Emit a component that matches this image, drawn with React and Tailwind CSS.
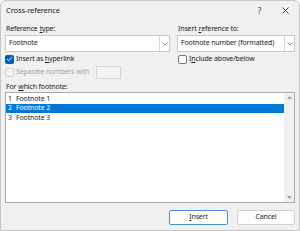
import React from 'react';

const font = { fontFamily: '"Noto Sans", "Segoe UI", sans-serif' };

function Chevron() {
  return (
    <svg width="6" height="4" viewBox="0 0 6 4" fill="none">
      <path d="M0.5 0.5 L3 3 L5.5 0.5" stroke="#707070" strokeWidth="0.8" />
    </svg>
  );
}

function Select({ value, className }) {
  return (
    <div className={`flex h-[17px] items-stretch border border-[#c9c9c9] bg-white ${className}`}>
      <div className="flex flex-1 items-center whitespace-nowrap pl-[3px] text-[#1b1b1b]">{value}</div>
      <div className="flex w-[10px] items-center justify-center border-l border-[#d6d6d6]">
        <Chevron />
      </div>
    </div>
  );
}

function Check({ checked, disabled }) {
  if (checked) {
    return (
      <div className="flex h-[9px] w-[9px] items-center justify-center rounded-[2px] bg-[#005fb8]">
        <svg width="7" height="6" viewBox="0 0 7 6" fill="none">
          <path d="M1 3 L2.8 4.8 L6 1.2" stroke="white" strokeWidth="0.9" />
        </svg>
      </div>
    );
  }
  return (
    <div
      className={`h-[9px] w-[9px] rounded-[2px] border ${
        disabled ? 'border-[#d2d2d2] bg-[#f3f3f3]' : 'border-[#7a7a7a] bg-[#fbfbfb]'
      }`}
    />
  );
}

const rows = [
  { n: 1, label: 'Footnote 1' },
  { n: 2, label: 'Footnote 2', selected: true },
  { n: 3, label: 'Footnote 3' },
];

export default function App() {
  return (
    <div style={font} className="flex h-[231px] w-[300px] flex-col overflow-hidden rounded-t-[6px] border border-[#c6c6c6] bg-[#f0f0f0] text-[7px] tracking-[-0.15px] text-[#1b1b1b]">
      {/* title bar */}
      <div className="flex h-[19px] items-center pl-[5px]">
        <span className="text-[7.6px]">Cross-reference</span>
        <span className="ml-auto mr-[21px] text-[8px] text-[#333]">?</span>
        <svg className="mr-[10px]" width="7" height="7" viewBox="0 0 7 7" fill="none">
          <path d="M0.5 0.5 L6.5 6.5 M6.5 0.5 L0.5 6.5" stroke="#333" strokeWidth="0.9" />
        </svg>
      </div>

      <div className="flex flex-1 flex-col px-[4px]">
        <div className="mt-[4px] flex gap-[7px]">
          <div className="w-[165px]">
            <div className="flex h-[10px] items-center pl-[1px]">
              Reference <span className="ml-[2px] underline">t</span>ype:
            </div>
            <Select value="Footnote" className="mt-[1px]" />
            <div className="mt-[2px] flex h-[10px] items-center gap-[2px]">
              <Check checked />
              <span>
                Insert as <span className="underline">h</span>yperlink
              </span>
            </div>
            <div className="mt-[2px] flex h-[13px] items-center whitespace-nowrap">
              <Check disabled />
              <span className="ml-[2px] text-[#a3a3a3]">Separate numbers with</span>
              <div className="ml-[6px] h-[13px] w-[25px] border border-[#d4d4d4] bg-[#f3f3f3]" />
            </div>
          </div>
          <div className="flex-1">
            <div className="flex h-[10px] items-center pl-[1px]">
              Insert <span className="ml-[2px] underline">r</span>eference to:
            </div>
            <Select value="Footnote number (formatted)" className="mt-[1px]" />
            <div className="mt-[2px] flex h-[10px] items-center gap-[2px] pl-[1px]">
              <Check />
              <span>
                I<span className="underline">n</span>clude above/below
              </span>
            </div>
          </div>
        </div>

        <div className="mt-[3px] flex h-[10px] items-center pl-[1px]">
          For <span className="ml-[2px] underline">w</span>hich footnote:
        </div>
        <div className="flex h-[111px] border border-[#a9a9a9] bg-white">
          <div className="flex-1 pt-[1px]">
            {rows.map((r) => (
              <div
                key={r.n}
                className={`flex h-[9.5px] items-center pl-[2px] ${r.selected ? 'bg-[#0078d7] text-white' : ''}`}
              >
                <span className="w-[8px]">{r.n}</span>
                <span>{r.label}</span>
              </div>
            ))}
          </div>
          <div className="flex w-[10px] flex-col items-center justify-between bg-[#f0f0f0] py-[3px]">
            <svg width="5" height="3" viewBox="0 0 5 3">
              <path d="M0 3 L2.5 0 L5 3 Z" fill="#a3a3a3" />
            </svg>
            <svg width="5" height="3" viewBox="0 0 5 3">
              <path d="M0 0 L2.5 3 L5 0 Z" fill="#a3a3a3" />
            </svg>
          </div>
        </div>

        <div className="mt-[7px] flex justify-end gap-[9px]">
          <button className="flex h-[15px] w-[59px] items-center justify-center rounded-[2px] border border-[#4c8fd6] bg-[#fdfdfd]">
            <span className="underline">I</span>nsert
          </button>
          <button className="flex h-[15px] w-[58px] items-center justify-center rounded-[2px] border border-[#d0d0d0] bg-[#fdfdfd]">
            Cancel
          </button>
        </div>
      </div>
    </div>
  );
}
